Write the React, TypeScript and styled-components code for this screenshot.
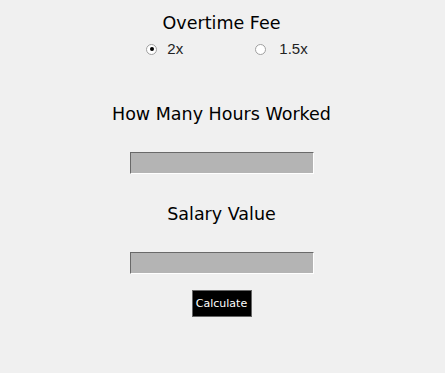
import React, { useState } from "react";
import styled, { createGlobalStyle } from "styled-components";

const GlobalStyle = createGlobalStyle`
  html, body {
    margin: 0;
    padding: 0;
    background: #f0f0f0;
  }
  body {
    font-family: "DejaVu Sans", "Liberation Sans", sans-serif;
    color: #000;
  }
`;

const RATES = [
  { label: "2x", gap: 10 },
  { label: "1.5x", gap: 13 },
];

export default function App() {
  const [rate, setRate] = useState("2x");
  const [hours, setHours] = useState("");
  const [salary, setSalary] = useState("");

  return (
    <>
      <GlobalStyle />
      <Page>
        <Title>Overtime Fee</Title>
        <RadioRow>
          {RATES.map((r, i) => (
            <Option
              key={r.label}
              $wide={i === 0}
              $gap={r.gap}
              onClick={() => setRate(r.label)}
            >
              <Dot $checked={rate === r.label} />
              <span>{r.label}</span>
            </Option>
          ))}
        </RadioRow>

        <Heading $top={46}>How Many Hours Worked</Heading>
        <Field value={hours} onChange={(e) => setHours(e.target.value)} />

        <Heading $top={30}>Salary Value</Heading>
        <Field value={salary} onChange={(e) => setSalary(e.target.value)} />

        <CalcButton>Calculate</CalcButton>
      </Page>
    </>
  );
}

const Page = styled.div`
  width: 445px;
  height: 373px;
  display: flex;
  flex-direction: column;
  align-items: center;
  padding-top: 13px;
  padding-right: 2px;
  box-sizing: border-box;
`;

const Title = styled.div`
  font-size: 17.5px;
  line-height: 20px;
`;

const RadioRow = styled.div`
  display: flex;
  margin-top: 7px;
  padding-left: 11px;
  font-family: "Liberation Sans", sans-serif;
  font-size: 15px;
  line-height: 18px;
  color: #222;
`;

const Option = styled.label<{ $wide?: boolean; $gap: number }>`
  display: flex;
  align-items: center;
  gap: ${(p) => p.$gap}px;
  width: ${(p) => (p.$wide ? "109px" : "auto")};
  cursor: pointer;
`;

const Dot = styled.span<{ $checked: boolean }>`
  width: 9px;
  height: 9px;
  border-radius: 50%;
  border: 1px solid #a0a0a0;
  background: #fff;
  position: relative;
  box-sizing: content-box;

  &::after {
    content: "";
    display: ${(p) => (p.$checked ? "block" : "none")};
    position: absolute;
    left: 2.5px;
    top: 2.5px;
    width: 4px;
    height: 4px;
    border-radius: 50%;
    background: #000;
  }
`;

const Heading = styled.div<{ $top: number }>`
  margin-top: ${(p) => p.$top}px;
  font-size: 17.5px;
  line-height: 20px;
`;

const Field = styled.input`
  margin-top: 28px;
  width: 184px;
  height: 22px;
  box-sizing: border-box;
  background: #b4b4b4;
  border: 1px solid;
  border-color: #696969 #fff #fff #696969;
  outline: none;
  padding: 0 3px;
  font: 12px "DejaVu Sans", sans-serif;
`;

const CalcButton = styled.button`
  margin-top: 16px;
  width: 60px;
  height: 27px;
  background: #000;
  color: #fff;
  border: 1px solid #666;
  font: 11px "DejaVu Sans", sans-serif;
  padding: 0;
  cursor: pointer;
`;
